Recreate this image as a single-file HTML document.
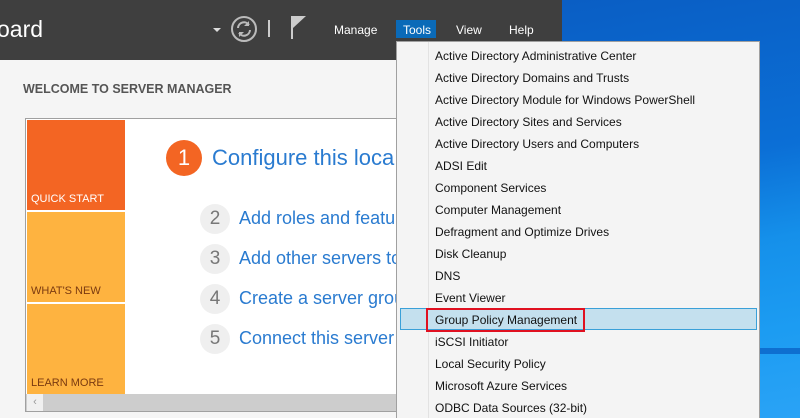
<!DOCTYPE html>
<html><head><style>
*{margin:0;padding:0;box-sizing:border-box}
body{width:800px;height:418px;overflow:hidden;position:relative;font-family:"Liberation Sans",sans-serif;background:#f5f5f5}
.desk{position:absolute;left:562px;top:0;width:238px;height:418px;background:linear-gradient(170deg,#0a5ec4 0%,#0b6fd6 40%,#1590ea 60%,#1c9cf2 80%,#2aa3f6 100%)}
.stripe{position:absolute;left:760px;top:348px;width:40px;height:6px;background:#0e6fd0}
.hdr{position:absolute;left:0;top:0;width:562px;height:60px;background:#3f3f3f;color:#fff}
.title{position:absolute;left:-3px;top:16px;font-size:23px;color:#fff;font-weight:300}
.m{position:absolute;top:23px;font-size:12px}
.tools{position:absolute;left:396px;top:20px;width:40px;height:18px;background:#0a6ab8}
.main{position:absolute;left:0;top:60px;width:562px;height:358px;background:#f5f5f5}
.welcome{position:absolute;left:23px;top:82px;font-size:12.5px;font-weight:bold;color:#555}
.box{position:absolute;left:25px;top:118px;width:375px;height:294px;border:1px solid #a0a0a0;background:#fff}
.tile{position:absolute;left:1px;width:98px;font-size:11px;padding:0 0 5px 4px;display:flex;align-items:flex-end}
.num{position:absolute;width:30px;height:30px;border-radius:50%;background:#efefef;color:#777;font-size:19px;text-align:center;line-height:30px}
.lnk{position:absolute;font-size:18px;color:#2a7bd0;white-space:nowrap}
.sb{position:absolute;left:0;top:275px;width:373px;height:17px;background:#cdcdcd}
.menu{position:absolute;left:396px;top:41px;width:364px;height:377px;background:#f4f4f4;border:1px solid #a0a0a0;border-bottom:none}
.gut{position:absolute;left:31px;top:0;width:1px;height:100%;background:#e2e2e2}
.it{position:absolute;left:38px;font-size:12px;color:#111;white-space:nowrap}
.hl{position:absolute;left:3px;top:266px;width:357px;height:22px;background:#c4e0ee;border:1px solid #3aa0d8}
.red{position:absolute;left:29px;top:266px;width:159px;height:24px;border:2px solid #e01020}
</style></head><body>
<div class="desk"></div><div class="stripe"></div>
<div class="hdr">
<div class="title">oard</div>
<div style="position:absolute;left:213px;top:28px;width:0;height:0;border-left:4px solid transparent;border-right:4px solid transparent;border-top:4px solid #ddd"></div>
<svg style="position:absolute;left:230px;top:15px" width="28" height="28" viewBox="0 0 28 28"><circle cx="14" cy="14" r="12" fill="none" stroke="#bbb" stroke-width="2"/><path d="M8 13a6 6 0 0 1 11-3M20 15a6 6 0 0 1-11 3" fill="none" stroke="#bbb" stroke-width="2"/><path d="M19 6v5h-5z M9 22v-5h5z" fill="#bbb"/></svg>
<div style="position:absolute;left:268px;top:20px;width:2px;height:17px;background:#ccc"></div>
<svg style="position:absolute;left:290px;top:15px" width="20" height="25"><path d="M1 1h2v23H1z" fill="#ccc"/><path d="M3 1h13l-13 12z" fill="#ccc"/></svg>
<div class="m" style="left:334px">Manage</div>
<div class="tools"></div>
<div class="m" style="left:403px">Tools</div>
<div class="m" style="left:456px">View</div>
<div class="m" style="left:509px">Help</div>
</div>
<div class="main"></div>
<div class="welcome">WELCOME TO SERVER MANAGER</div>
<div class="box">
<div class="tile" style="top:1px;height:90px;background:#f36523;color:#fff">QUICK START</div>
<div class="tile" style="top:93px;height:90px;background:#feb340;color:#7a3a10">WHAT'S NEW</div>
<div class="tile" style="top:185px;height:90px;background:#feb340;color:#7a3a10">LEARN MORE</div>
<div style="position:absolute;left:140px;top:21px;width:36px;height:36px;border-radius:50%;background:#f36523;color:#fff;font-size:22px;text-align:center;line-height:36px">1</div>
<div class="lnk" style="left:186px;top:26px;font-size:22px">Configure this loca</div>
<div class="num" style="left:174px;top:85px">2</div><div class="lnk" style="left:213px;top:89px">Add roles and featu</div>
<div class="num" style="left:174px;top:125px">3</div><div class="lnk" style="left:213px;top:129px">Add other servers to</div>
<div class="num" style="left:174px;top:165px">4</div><div class="lnk" style="left:213px;top:169px">Create a server grou</div>
<div class="num" style="left:174px;top:205px">5</div><div class="lnk" style="left:213px;top:209px">Connect this server t</div>
<div class="sb"><div style="position:absolute;left:1px;top:0;width:16px;height:17px;background:#f0f0f0;color:#999;font-size:11px;text-align:center;line-height:17px">‹</div></div>
</div>
<div class="menu">
<div class="gut"></div>
<div class="hl"></div>
<div class="it" style="top:7px">Active Directory Administrative Center</div>
<div class="it" style="top:29px">Active Directory Domains and Trusts</div>
<div class="it" style="top:51px">Active Directory Module for Windows PowerShell</div>
<div class="it" style="top:73px">Active Directory Sites and Services</div>
<div class="it" style="top:95px">Active Directory Users and Computers</div>
<div class="it" style="top:117px">ADSI Edit</div>
<div class="it" style="top:139px">Component Services</div>
<div class="it" style="top:161px">Computer Management</div>
<div class="it" style="top:183px">Defragment and Optimize Drives</div>
<div class="it" style="top:205px">Disk Cleanup</div>
<div class="it" style="top:227px">DNS</div>
<div class="it" style="top:249px">Event Viewer</div>
<div class="it" style="top:271px">Group Policy Management</div>
<div class="red"></div>
<div class="it" style="top:293px">iSCSI Initiator</div>
<div class="it" style="top:315px">Local Security Policy</div>
<div class="it" style="top:337px">Microsoft Azure Services</div>
<div class="it" style="top:359px">ODBC Data Sources (32-bit)</div>
</div>
</body></html>
